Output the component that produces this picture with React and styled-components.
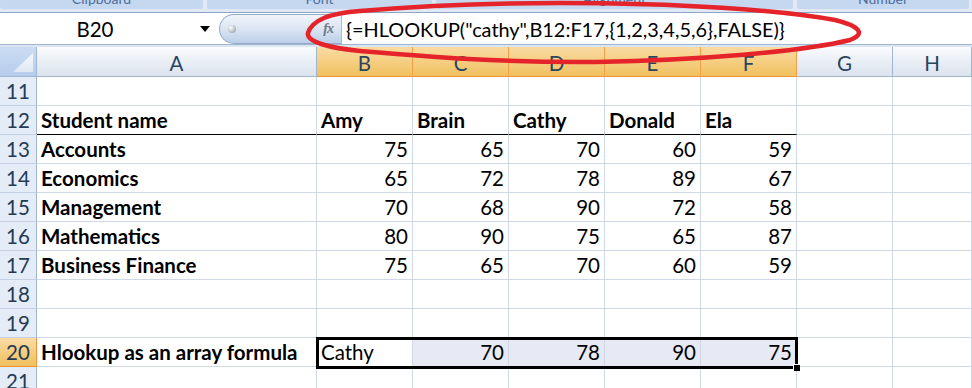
import React from "react";
import styled, { createGlobalStyle } from "styled-components";

// DATA
const COLUMNS = ["A", "B", "C", "D", "E", "F", "G", "H"];
const SELECTED_COLUMNS = ["B", "C", "D", "E", "F"];
const FORMULA = '{=HLOOKUP("cathy",B12:F17,{1,2,3,4,5,6},FALSE)}';

const ROWS = [
  { n: 11, cells: [] },
  { n: 12, cells: ["Student name", "Amy", "Brain", "Cathy", "Donald", "Ela"], heading: true },
  { n: 13, cells: ["Accounts", 75, 65, 70, 60, 59] },
  { n: 14, cells: ["Economics", 65, 72, 78, 89, 67] },
  { n: 15, cells: ["Management", 70, 68, 90, 72, 58] },
  { n: 16, cells: ["Mathematics", 80, 90, 75, 65, 87] },
  { n: 17, cells: ["Business Finance", 75, 65, 70, 60, 59] },
  { n: 18, cells: [] },
  { n: 19, cells: [] },
  { n: 20, cells: ["Hlookup as an array formula", "Cathy", 70, 78, 90, 75], selected: true },
  { n: 21, cells: [] },
];

const GROUPS = [
  { name: "Clipboard", width: 203 },
  { name: "Font", width: 225 },
  { name: "Alignment", width: 357 },
  { name: "Number", width: 172 },
];

const App = () => {
  return (
    <Screen>
      <GlobalStyle />
      <Ribbon>
        {GROUPS.map((g) => (
          <Group key={g.name} $width={g.width}>
            <GroupLabel>{g.name}</GroupLabel>
          </Group>
        ))}
      </Ribbon>

      <FormulaBar>
        <NameBox>
          <CellName>B20</CellName>
          <DropArrow />
        </NameBox>
        <Handle>
          <Knob />
          <Fx>fx</Fx>
        </Handle>
        <FormulaInput>{FORMULA}</FormulaInput>
      </FormulaBar>
      <Band />

      <Sheet>
        <Corner>
          <CornerTriangle />
        </Corner>
        {COLUMNS.map((c) => (
          <ColHead key={c} $active={SELECTED_COLUMNS.includes(c)}>
            {c}
          </ColHead>
        ))}

        {ROWS.map((row) => (
          <React.Fragment key={row.n}>
            <RowHead $active={row.selected}>{row.n}</RowHead>
            {COLUMNS.map((c, i) => {
              const value = row.cells[i];
              const isNum = typeof value === "number";
              return (
                <Cell
                  key={c}
                  $num={isNum}
                  $bold={i === 0 || row.heading}
                  $rule={row.heading && i < 6}
                  $shade={row.selected && i >= 2 && i <= 5}
                >
                  {value}
                </Cell>
              );
            })}
          </React.Fragment>
        ))}

        <Selection>
          <FillHandle />
        </Selection>
      </Sheet>

      <Marker viewBox="0 0 972 388" width="972" height="388">
        <path
          d="M 308,33 C 312,20 330,13 360,11 C 420,6 480,3 560,3 C 680,3 780,10 835,20 C 860,26 866,34 850,40 C 800,52 700,60 596,62 C 500,63 420,56 360,51 C 330,48 306,42 308,33 Z"
          fill="none"
          stroke="#e5232a"
          strokeWidth="4.5"
          strokeLinejoin="round"
        />
      </Marker>
    </Screen>
  );
};

const GlobalStyle = createGlobalStyle`
  html, body {
    margin: 0;
    padding: 0;
    background: #fff;
  }
  body {
    font-family: Lato, "Liberation Sans", sans-serif;
  }
`;

const FONT_SIZE = "20.5px";

const Screen = styled.div`
  position: relative;
  width: 972px;
  height: 388px;
  overflow: hidden;
  display: flex;
  flex-direction: column;
  background: #fff;
`;

const Ribbon = styled.div`
  flex: none;
  height: 13px;
  box-sizing: border-box;
  display: flex;
  gap: 4px;
  align-items: flex-start;
  background: #dfe8f4;
  border-bottom: 1px solid #8ea6c5;
`;

const Group = styled.div`
  width: ${(p) => p.$width}px;
  height: 9px;
  overflow: hidden;
  background: #c5d8f0;
  border-radius: 0 0 3px 3px;
  text-align: center;
`;

const GroupLabel = styled.div`
  margin-top: -8px;
  font-size: 14px;
  line-height: 14px;
  color: #4c6d9c;
`;

const FormulaBar = styled.div`
  flex: none;
  height: 31px;
  box-sizing: border-box;
  padding-top: 1px;
  display: flex;
  background: #fff;
`;

const NameBox = styled.div`
  width: 219px;
  display: flex;
  align-items: center;
`;

const CellName = styled.div`
  width: 190px;
  text-align: center;
  font-size: ${FONT_SIZE};
  color: #000;
`;

const DropArrow = styled.div`
  margin-left: auto;
  margin-right: 9px;
  width: 0;
  height: 0;
  border-left: 5px solid transparent;
  border-right: 5px solid transparent;
  border-top: 6px solid #000;
`;

const Handle = styled.div`
  width: 122px;
  box-sizing: border-box;
  display: flex;
  align-items: center;
  border: 1px solid #93abcb;
  border-right: none;
  border-radius: 15px 0 0 15px;
  background: linear-gradient(#f1f5fb, #dae5f3 50%, #bccfe8);
`;

const Knob = styled.div`
  width: 8px;
  height: 8px;
  margin-left: 8px;
  border-radius: 50%;
  background: radial-gradient(circle at 35% 35%, #ffffff, #b8bcc2 60%, #8e949c);
`;

const Fx = styled.div`
  margin-left: auto;
  margin-right: 8px;
  font-family: "Liberation Serif", serif;
  font-style: italic;
  font-weight: 700;
  font-size: 14px;
  letter-spacing: -1px;
  color: #6f7884;
`;

const FormulaInput = styled.div`
  flex: 1;
  display: flex;
  align-items: center;
  padding-left: 4px;
  border-left: 1px solid #a8bbd3;
  font-size: 19.9px;
  color: #000;
  white-space: nowrap;
`;

const Band = styled.div`
  flex: none;
  height: 3px;
  box-sizing: border-box;
  border-top: 1px solid #a2b5ce;
  background: #dce6f3;
`;

const Sheet = styled.div`
  position: relative;
  flex: none;
  display: grid;
  grid-template-columns: 37px 280px repeat(6, 96px) 79px;
  grid-template-rows: 30px;
  grid-auto-rows: 29px;
  font-size: ${FONT_SIZE};
  line-height: 1.2;
`;

const Corner = styled.div`
  box-sizing: border-box;
  display: flex;
  align-items: flex-end;
  justify-content: flex-end;
  padding: 0 3px 4px 0;
  background: linear-gradient(#cbdcf2, #b6cdec);
  border-right: 1px solid #9eb6ce;
  border-bottom: 1px solid #9eb6ce;
`;

const CornerTriangle = styled.div`
  width: 20px;
  height: 19px;
  clip-path: polygon(100% 0, 100% 100%, 0 100%);
  background: linear-gradient(#f6f9fd, #dde8f5);
`;

const ColHead = styled.div`
  box-sizing: border-box;
  display: flex;
  align-items: flex-end;
  justify-content: center;
  padding-bottom: 0;
  color: #2a4461;
  background: ${(p) =>
    p.$active
      ? "linear-gradient(#f9dba4, #f1c15f)"
      : "linear-gradient(#f9fbfd, #dbe3ee)"};
  border-right: 1px solid ${(p) => (p.$active ? "#f2a04a" : "#9eb6ce")};
  border-bottom: 1px solid ${(p) => (p.$active ? "#f29436" : "#9eb6ce")};
`;

const RowHead = styled.div`
  box-sizing: border-box;
  display: flex;
  align-items: flex-end;
  justify-content: center;
  padding-bottom: 1px;
  color: #243a55;
  background: ${(p) =>
    p.$active ? "linear-gradient(#f9dba4, #f1c15f)" : "#e4ecf7"};
  border-right: 1px solid ${(p) => (p.$active ? "#f29436" : "#9eb6ce")};
  border-bottom: 1px solid ${(p) => (p.$active ? "#f29436" : "#c3d1e3")};
`;

const Cell = styled.div`
  box-sizing: border-box;
  display: flex;
  align-items: flex-end;
  justify-content: ${(p) => (p.$num ? "flex-end" : "flex-start")};
  padding: 0 4px 1px 4px;
  white-space: nowrap;
  font-weight: ${(p) => (p.$bold ? 700 : 400)};
  color: #000;
  background: ${(p) => (p.$shade ? "#e7eaf4" : "#fff")};
  border-right: 1px solid #d0d7e5;
  border-bottom: 1px solid ${(p) => (p.$rule ? "#000" : "#d0d7e5")};
`;

const Selection = styled.div`
  position: absolute;
  grid-column: 3 / 8;
  grid-row: 11 / 12;
  inset: -1px -1px -2px -1px;
  border: 3px solid #000;
  pointer-events: none;
`;

const FillHandle = styled.div`
  position: absolute;
  right: -5px;
  bottom: -5px;
  width: 6px;
  height: 6px;
  background: #000;
  border-left: 1px solid #fff;
  border-top: 1px solid #fff;
`;

const Marker = styled.svg`
  position: absolute;
  top: 0;
  left: 0;
  pointer-events: none;
`;

export default App;
